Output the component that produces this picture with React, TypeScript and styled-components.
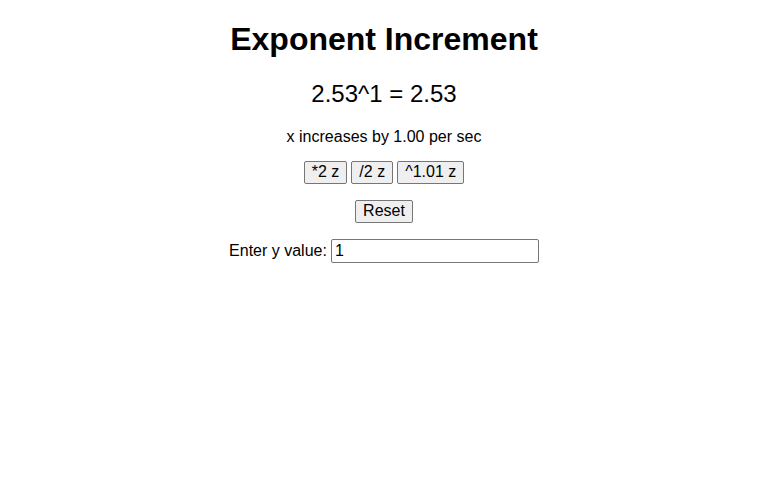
import React, { useState } from "react";
import styled, { createGlobalStyle } from "styled-components";

const GlobalStyle = createGlobalStyle`
  html, body {
    margin: 0;
    padding: 0;
    background: #ffffff;
  }
  body {
    font-family: "Liberation Sans", Arial, sans-serif;
    color: #000000;
  }
`;

const Page = styled.div`
  text-align: center;
`;

const Title = styled.h1`
  font-size: 32px;
  font-weight: bold;
  margin: 21.44px 0;
`;

const Equation = styled.h2`
  font-size: 24px;
  font-weight: normal;
  margin: 19.92px 0;
`;

const Rate = styled.p`
  font-size: 16px;
  margin: 16px 0 15px;
`;

const Row = styled.div`
  margin: 15px 0 16px;
  display: flex;
  justify-content: center;
  align-items: center;
  gap: 4px;
  font-size: 16px;
`;

const Button = styled.button`
  font-family: "Liberation Sans", Arial, sans-serif;
  font-size: 16px;
  height: 23px;
  padding: 0 7px;
  background: #efefef;
  color: #000000;
  border: 1px solid #767676;
  border-radius: 2px;
  cursor: pointer;
`;

const Label = styled.label`
  font-size: 16px;
`;

const Input = styled.input`
  font-family: "Liberation Sans", Arial, sans-serif;
  font-size: 16px;
  width: 208px;
  height: 24px;
  box-sizing: border-box;
  padding: 1px 3px;
  border: 1px solid #767676;
  border-radius: 2px;
`;

export default function App() {
  const [y, setY] = useState("1");
  return (
    <Page>
      <GlobalStyle />
      <Title>Exponent Increment</Title>
      <Equation>2.53^{y} = 2.53</Equation>
      <Rate>x increases by 1.00 per sec</Rate>
      <Row>
        <Button>*2 z</Button>
        <Button>/2 z</Button>
        <Button>^1.01 z</Button>
      </Row>
      <Row>
        <Button>Reset</Button>
      </Row>
      <Row>
        <Label htmlFor="yval">Enter y value:</Label>
        <Input id="yval" value={y} onChange={(e) => setY(e.target.value)} />
      </Row>
    </Page>
  );
}
